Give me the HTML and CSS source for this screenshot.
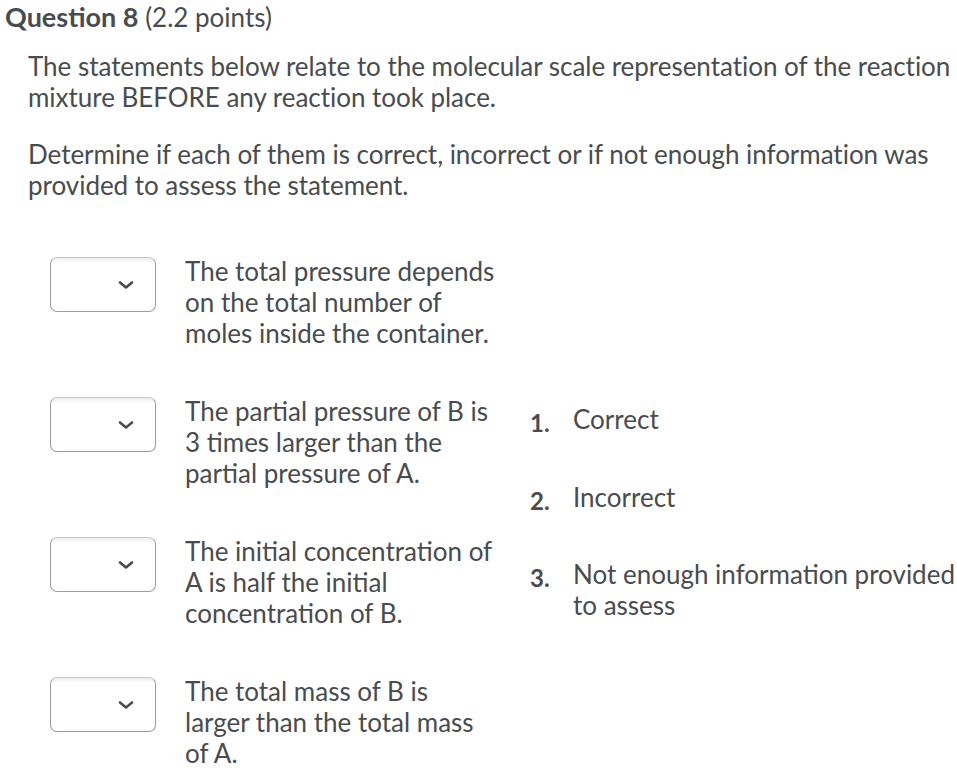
FILE: index.html
```html
<!DOCTYPE html>
<html>
<head>
<meta charset="utf-8">
<link rel="stylesheet" href="styles.css">
</head>
<body>
<h2 class="title"><span class="qnum">Question 8</span> <span class="pts">(2.2 points)</span></h2>
<div class="content">
  <p class="para">The statements below relate to the molecular scale representation of the reaction mixture BEFORE any reaction took place.</p>
  <p class="para">Determine if each of them is correct, incorrect or if not enough information was provided to assess the statement.</p>
  <div class="matching">
    <div class="statements">
      <div class="row">
        <div class="select"><svg class="chev" width="16" height="10" viewBox="0 0 16 10"><path d="M2 2.5 L8 7.5 L14 2.5" fill="none" stroke="#494c4e" stroke-width="2.6" stroke-linecap="round" stroke-linejoin="round"/></svg></div>
        <div class="stext">The total pressure depends on the total number of moles inside the container.</div>
      </div>
      <div class="row">
        <div class="select"><svg class="chev" width="16" height="10" viewBox="0 0 16 10"><path d="M2 2.5 L8 7.5 L14 2.5" fill="none" stroke="#494c4e" stroke-width="2.6" stroke-linecap="round" stroke-linejoin="round"/></svg></div>
        <div class="stext">The partial pressure of B is 3 times larger than the partial pressure of A.</div>
      </div>
      <div class="row">
        <div class="select"><svg class="chev" width="16" height="10" viewBox="0 0 16 10"><path d="M2 2.5 L8 7.5 L14 2.5" fill="none" stroke="#494c4e" stroke-width="2.6" stroke-linecap="round" stroke-linejoin="round"/></svg></div>
        <div class="stext">The initial concentration of A is half the initial concentration of B.</div>
      </div>
      <div class="row">
        <div class="select"><svg class="chev" width="16" height="10" viewBox="0 0 16 10"><path d="M2 2.5 L8 7.5 L14 2.5" fill="none" stroke="#494c4e" stroke-width="2.6" stroke-linecap="round" stroke-linejoin="round"/></svg></div>
        <div class="stext">The total mass of B is larger than the total mass of A.</div>
      </div>
    </div>
    <ol class="answers">
      <li class="answer"><span class="num">1.</span><span class="atext">Correct</span></li>
      <li class="answer"><span class="num">2.</span><span class="atext">Incorrect</span></li>
      <li class="answer"><span class="num">3.</span><span class="atext">Not enough information provided to assess</span></li>
    </ol>
  </div>
</div>
</body>
</html>
```
FILE: styles.css
```css
html, body {
  margin: 0;
  padding: 0;
  background: #ffffff;
  overflow: hidden;
}
body {
  font-family: Lato, "Open Sans", sans-serif;
  color: #494c4e;
  width: 957px;
}
.title {
  margin: 0;
  padding: 0 0 0 5px;
  height: 34px;
  font-size: 26px;
  line-height: 34px;
  font-weight: 400;
  white-space: nowrap;
}
.qnum {
  font-weight: 700;
  font-size: 27px;
}
.pts {
  font-size: 26px;
}
.content {
  padding: 17px 0 0 28px;
}
.para {
  margin: 0 0 26px 0;
  font-size: 26px;
  line-height: 31px;
  letter-spacing: -0.03px;
}
.matching {
  display: flex;
  align-items: center;
  margin-top: 55px;
}
.statements {
  display: flex;
  flex-direction: column;
  gap: 47px;
  padding-left: 22px;
}
.row {
  display: flex;
  align-items: flex-start;
}
.select {
  box-sizing: border-box;
  width: 106px;
  height: 55px;
  margin-top: 1px;
  border: 1px solid #9a9da0;
  border-top-color: #c4c6c8;
  border-radius: 7px;
  background: linear-gradient(#eceeef 0, #f7f8f8 3px, #ffffff 6px);
  display: flex;
  align-items: center;
  justify-content: flex-end;
  padding-right: 21px;
  flex-shrink: 0;
}
.chev {
  display: block;
  margin-top: 0;
}
.stext {
  width: 312px;
  margin-left: 29px;
  font-size: 26px;
  line-height: 31px;
}
.answers {
  list-style: none;
  margin: 0 0 0 33px;
  padding: 0;
  display: flex;
  flex-direction: column;
  gap: 46.5px;
}
.answer {
  display: flex;
  font-size: 26px;
  line-height: 31px;
}
.num {
  width: 43px;
  flex-shrink: 0;
  font-weight: 700;
  font-size: 24px;
  line-height: 27px;
  padding-top: 5px;
  height: 26px;
}
.atext {
  width: 390px;
}
```
